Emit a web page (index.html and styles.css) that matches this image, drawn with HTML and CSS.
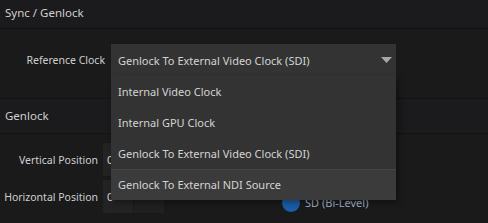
FILE: index.html
```html
<!DOCTYPE html>
<html lang="en">
<head>
    <meta charset="UTF-8">
    <title>Sync / Genlock</title>
    <link rel="stylesheet" href="styles.css">
</head>
<body>
    <div class="section-head top">Sync / Genlock</div>

    <div class="ref-row">
        <span class="label ref-label">Reference Clock</span>
        <div class="select-wrap">
            <div class="select">
                <span>Genlock To External Video Clock (SDI)</span>
                <svg class="arrow" width="11" height="6" viewBox="0 0 11 6"><path d="M0 0 H11 L5.5 6 Z" fill="#a8a8a8"/></svg>
            </div>
            <ul class="menu">
                <li>Internal Video Clock</li>
                <li>Internal GPU Clock</li>
                <li>Genlock To External Video Clock (SDI)</li>
                <li class="hover">Genlock To External NDI Source</li>
            </ul>
        </div>
    </div>

    <div class="section-head">Genlock</div>

    <div class="fields">
        <div class="field">
            <span class="label">Vertical Position</span>
            <div class="num">0</div>
            <div class="num-side"></div>
        </div>
        <div class="field">
            <span class="label">Horizontal Position</span>
            <div class="num">0</div>
            <div class="num-side"></div>
        </div>
        <div class="radio">
            <span class="dot"></span>
            <span>SD (Bi-Level)</span>
        </div>
    </div>
</body>
</html>
```

FILE: styles.css
```css
body {
    margin: 0;
    width: 488px;
    height: 223px;
    overflow: hidden;
    background-color: #1b1a1c;
    font-family: 'Segoe UI', 'Noto Sans', sans-serif;
    font-size: 11px;
    color: #d4d4d4;
    position: relative;
}
.section-head {
    height: 34px;
    line-height: 34px;
    padding-left: 5px;
    background-color: #1b1a1c;
    border-top: 1px solid #121212;
    border-bottom: 1px solid #121212;
    color: #d0d0d0;
    font-size: 11.5px;
}
.section-head.top {
    height: 28px;
    line-height: 26px;
    border-top: none;
}
.ref-row {
    height: 69px;
    display: flex;
    align-items: flex-start;
    padding-top: 15px;
    box-sizing: border-box;
    background-color: #1a1a1a;
}
.label {
    text-align: right;
    color: #cfcfcf;
    white-space: nowrap;
    font-size: 10.5px;
}
.ref-label {
    width: 105px;
    line-height: 32px;
}
.select-wrap {
    margin-left: 6px;
    width: 285px;
    position: relative;
    z-index: 2;
}
.select {
    height: 32px;
    display: flex;
    align-items: center;
    justify-content: space-between;
    padding: 0 4px 0 7px;
    background-color: #333333;
}
.arrow {
    margin-bottom: 1px;
}
.menu {
    position: absolute;
    top: 32px;
    left: 0;
    right: 0;
    margin: 0;
    padding: 0;
    list-style-type: none;
    background-color: #333333;
    box-shadow: 3px 3px 6px rgba(0,0,0,0.35);
}
.menu li {
    height: 31px;
    line-height: 31px;
    padding-left: 7px;
}
.menu li.hover {
    height: 30px;
    line-height: 30px;
    background-color: #3b3b3b;
    border-top: 1px solid #444444;
}
.fields {
    position: relative;
    padding-top: 9px;
    background-color: #1a1a1a;
    height: 80px;
}
.field {
    display: flex;
    align-items: center;
    height: 33px;
    margin-bottom: 4px;
}
.field .label {
    width: 98px;
}
.num {
    margin-left: 5px;
    width: 26px;
    height: 33px;
    line-height: 33px;
    padding-left: 4px;
    background-color: #232323;
    color: #d6d6d6;
}
.num-side {
    width: 30px;
    height: 33px;
    margin-left: 1px;
    background-color: #202020;
}
.radio {
    position: absolute;
    left: 282px;
    top: 60px;
    display: flex;
    align-items: center;
    gap: 5px;
    line-height: 18px;
    color: #9fb2c8;
}
.dot {
    width: 18px;
    height: 18px;
    border-radius: 50%;
    background-color: #1b5ea8;
}
```
